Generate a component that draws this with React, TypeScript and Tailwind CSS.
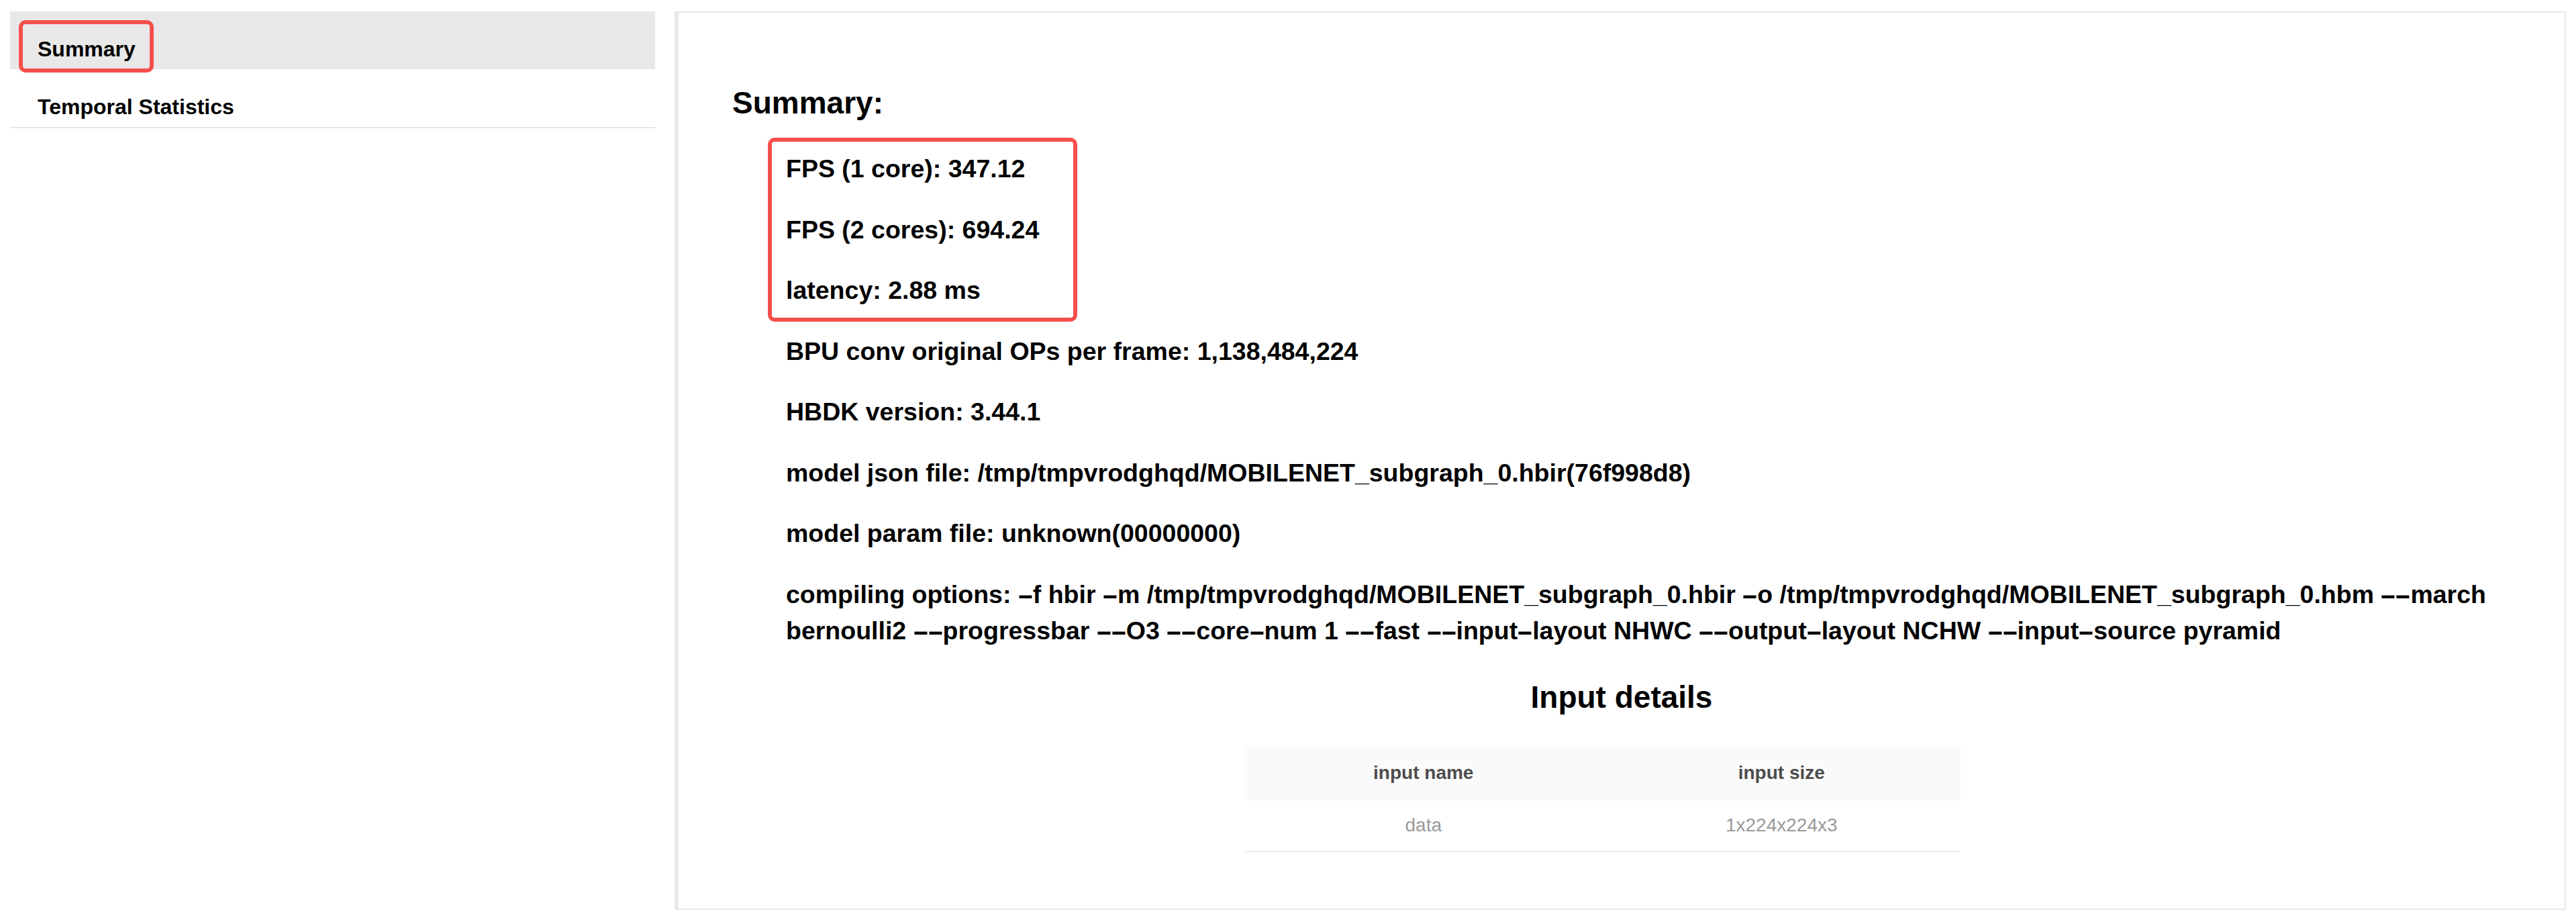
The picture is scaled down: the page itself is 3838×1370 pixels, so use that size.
const sans = "font-['Liberation_Sans','Helvetica_Neue',Arial,sans-serif]"

const facts = [
  'BPU conv original OPs per frame: 1,138,484,224',
  'HBDK version: 3.44.1',
  'model json file: /tmp/tmpvrodghqd/MOBILENET_subgraph_0.hbir(76f998d8)',
  'model param file: unknown(00000000)',
]

// the report font draws its hyphens long; widen ours to match
function Dashed({ text }: { text: string }) {
  const parts = text.split('-')
  return (
    <>
      {parts.map((p, i) => (
        <span key={i}>
          {p}
          {i < parts.length - 1 && <span className="inline-block w-[22px] scale-x-[2] text-center">-</span>}
        </span>
      ))}
    </>
  )
}

export default function App() {
  return (
    <div className={`${sans} flex min-h-screen items-start bg-white pl-[15px] pt-[17px] text-black`}>
      {/* Side menu */}
      <nav className="w-[961px] shrink-0">
        <div className="relative h-[86px] bg-[#e8e8e8] pl-[41px] pt-[40px] text-[32px] font-bold leading-[32px]">
          Summary
          <span className="pointer-events-none absolute left-[13px] top-[13px] h-[78px] w-[201px] rounded-[10px] border-[6px] border-[#f54f4c]" />
        </div>
        <div className="h-[88px] border-b-2 border-[#e8e8e8] pl-[41px] pt-[40px] text-[32px] font-bold leading-[32px]">
          Temporal Statistics
        </div>
      </nav>

      {/* Report panel */}
      <main className="ml-[29px] h-[1338px] w-[2818px] shrink-0 border-2 border-l-[6px] border-[#e8e8e8] px-[80px] pt-[111px]">
        <h3 className="text-[46px] font-bold leading-[46px]">Summary:</h3>

        <div className="ml-[80px] mt-[48px] text-[37.5px] font-bold leading-[54px]">
          <div className="relative">
            <p className="mb-[36.5px]">FPS (1 core): 347.12</p>
            <p className="mb-[36.5px]">FPS (2 cores): 694.24</p>
            <p className="mb-[36.5px]">latency: 2.88 ms</p>
            <span className="pointer-events-none absolute -left-[27px] -top-[19px] h-[274px] w-[461px] rounded-[10px] border-[6px] border-[#f54f4c]" />
          </div>
          {facts.map((f) => (
            <p key={f} className="mb-[36.5px]">{f}</p>
          ))}
          <p className="whitespace-nowrap">
            <Dashed text="compiling options: -f hbir -m /tmp/tmpvrodghqd/MOBILENET_subgraph_0.hbir -o /tmp/tmpvrodghqd/MOBILENET_subgraph_0.hbm --march" />
            <br />
            <Dashed text="bernoulli2 --progressbar --O3 --core-num 1 --fast --input-layout NHWC --output-layout NCHW --input-source pyramid" />
          </p>
        </div>

        <h3 className="mt-[49px] text-center text-[46px] font-bold leading-[46px]">Input details</h3>

        <table className="ml-[763px] mt-[49px] w-[1067px] table-fixed border-collapse text-center text-[28px]">
          <thead>
            <tr className="bg-[#fafafa]">
              <th className="h-[82px] font-bold text-[#4d4d4d]">input name</th>
              <th className="h-[82px] font-bold text-[#4d4d4d]">input size</th>
            </tr>
          </thead>
          <tbody>
            <tr className="border-b-2 border-[#f0f0f0]">
              <td className="h-[76px] text-[#999999]">data</td>
              <td className="h-[76px] text-[#999999]">1x224x224x3</td>
            </tr>
          </tbody>
        </table>
      </main>
    </div>
  )
}
